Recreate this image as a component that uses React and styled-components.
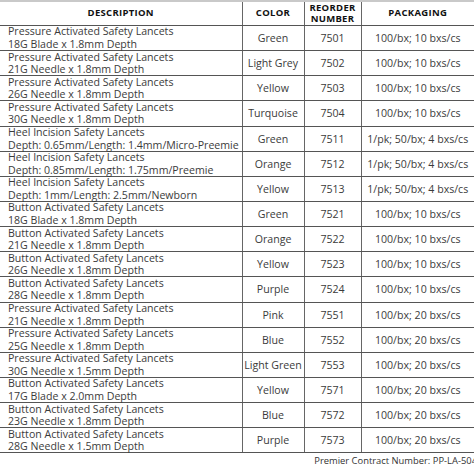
import styled, { createGlobalStyle } from "styled-components";

const Global = createGlobalStyle`
  html, body {
    margin: 0;
    padding: 0;
    background: #fff;
    overflow: hidden;
  }
  body {
    font-family: "Open Sans", "Liberation Sans", sans-serif;
  }
`;

const Page = styled.div`
  width: 474px;
  height: 467px;
  border-top: 2px solid #c9c9c9;
  box-sizing: border-box;
  overflow: hidden;
`;

const Table = styled.table`
  width: 474px;
  border-collapse: collapse;
  table-layout: fixed;
`;

const HeadCell = styled.th`
  height: 23px;
  padding: 0;
  font-size: 9.5px;
  font-weight: 700;
  line-height: 10.5px;
  letter-spacing: 0.3px;
  color: #111;
  text-align: center;
  vertical-align: middle;
  border-bottom: 1.5px solid #555;
  border-left: ${(p) => (p.$first ? "none" : "1px solid #666")};
`;

const Row = styled.tr`
  height: 25.15px;
`;

const Cell = styled.td`
  padding: 0;
  padding-left: ${(p) => (p.$left ? "8px" : "0")};
  font-size: 10.6px;
  line-height: 12px;
  color: #3b3b3b;
  text-align: ${(p) => (p.$left ? "left" : "center")};
  vertical-align: middle;
  white-space: nowrap;
  border-bottom: 1.5px solid #555;
  border-left: ${(p) => (p.$left ? "none" : "1px solid #666")};
`;

const Desc = styled.div`
  height: 23.6px;
  display: flex;
  flex-direction: column;
  justify-content: center;
  line-height: 12.6px;
`;

const Footer = styled.div`
  display: flex;
  justify-content: flex-end;
  margin-top: 2px;
  margin-right: -3px;
  font-size: 9.4px;
  line-height: 12px;
  color: #333;
  white-space: nowrap;
`;

const rows = [
  ["Pressure Activated Safety Lancets", "18G Blade x 1.8mm Depth", "Green", "7501", "100/bx; 10 bxs/cs"],
  ["Pressure Activated Safety Lancets", "21G Needle x 1.8mm Depth", "Light Grey", "7502", "100/bx; 10 bxs/cs"],
  ["Pressure Activated Safety Lancets", "26G Needle x 1.8mm Depth", "Yellow", "7503", "100/bx; 10 bxs/cs"],
  ["Pressure Activated Safety Lancets", "30G Needle x 1.8mm Depth", "Turquoise", "7504", "100/bx; 10 bxs/cs"],
  ["Heel Incision Safety Lancets", "Depth: 0.65mm/Length: 1.4mm/Micro-Preemie", "Green", "7511", "1/pk; 50/bx; 4 bxs/cs"],
  ["Heel Incision Safety Lancets", "Depth: 0.85mm/Length: 1.75mm/Preemie", "Orange", "7512", "1/pk; 50/bx; 4 bxs/cs"],
  ["Heel Incision Safety Lancets", "Depth: 1mm/Length: 2.5mm/Newborn", "Yellow", "7513", "1/pk; 50/bx; 4 bxs/cs"],
  ["Button Activated Safety Lancets", "18G Blade x 1.8mm Depth", "Green", "7521", "100/bx; 10 bxs/cs"],
  ["Button Activated Safety Lancets", "21G Needle x 1.8mm Depth", "Orange", "7522", "100/bx; 10 bxs/cs"],
  ["Button Activated Safety Lancets", "26G Needle x 1.8mm Depth", "Yellow", "7523", "100/bx; 10 bxs/cs"],
  ["Button Activated Safety Lancets", "28G Needle x 1.8mm Depth", "Purple", "7524", "100/bx; 10 bxs/cs"],
  ["Pressure Activated Safety Lancets", "21G Needle x 1.8mm Depth", "Pink", "7551", "100/bx; 20 bxs/cs"],
  ["Pressure Activated Safety Lancets", "25G Needle x 1.8mm Depth", "Blue", "7552", "100/bx; 20 bxs/cs"],
  ["Pressure Activated Safety Lancets", "30G Needle x 1.5mm Depth", "Light Green", "7553", "100/bx; 20 bxs/cs"],
  ["Button Activated Safety Lancets", "17G Blade x 2.0mm Depth", "Yellow", "7571", "100/bx; 20 bxs/cs"],
  ["Button Activated Safety Lancets", "23G Needle x 1.8mm Depth", "Blue", "7572", "100/bx; 20 bxs/cs"],
  ["Button Activated Safety Lancets", "28G Needle x 1.5mm Depth", "Purple", "7573", "100/bx; 20 bxs/cs"],
];

export default function App() {
  return (
    <>
      <Global />
      <Page>
        <Table>
          <colgroup>
            <col style={{ width: "242px" }} />
            <col style={{ width: "62px" }} />
            <col style={{ width: "57px" }} />
            <col style={{ width: "113px" }} />
          </colgroup>
          <thead>
            <tr>
              <HeadCell $first>DESCRIPTION</HeadCell>
              <HeadCell>COLOR</HeadCell>
              <HeadCell>
                REORDER
                <br />
                NUMBER
              </HeadCell>
              <HeadCell>PACKAGING</HeadCell>
            </tr>
          </thead>
          <tbody>
            {rows.map((r) => (
              <Row key={r[3]}>
                <Cell $left>
                  <Desc>
                    <span>{r[0]}</span>
                    <span>{r[1]}</span>
                  </Desc>
                </Cell>
                <Cell>{r[2]}</Cell>
                <Cell>{r[3]}</Cell>
                <Cell>{r[4]}</Cell>
              </Row>
            ))}
          </tbody>
        </Table>
        <Footer>Premier Contract Number: PP-LA-504</Footer>
      </Page>
    </>
  );
}
